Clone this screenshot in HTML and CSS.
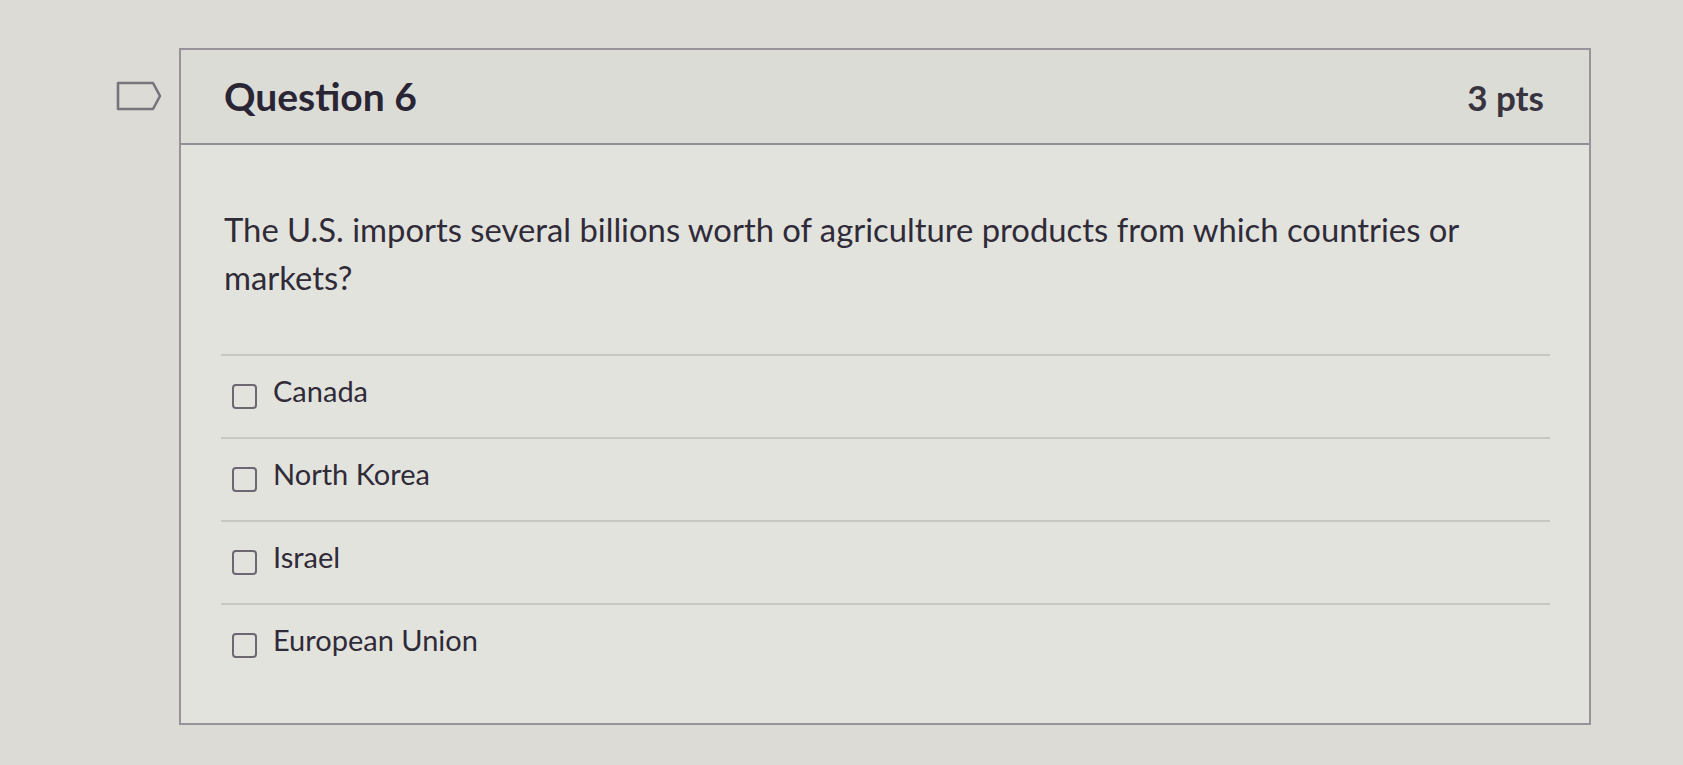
FILE: index.html
```html
<!DOCTYPE html>
<html lang="en">
<head>
<meta charset="utf-8">
<title>Question 6</title>
<link rel="stylesheet" href="styles.css">
</head>
<body>
<div class="quiz">
  <div class="flag-col">
    <svg class="flag" width="47" height="30" viewBox="0 0 47 30" aria-hidden="true">
      <path d="M2 2 H37 L44 15 L37 28 H2 Z" fill="none" stroke="#77747d" stroke-width="2.6" stroke-linejoin="round"/>
    </svg>
  </div>
  <div class="card">
    <div class="card-header">
      <h2 class="q-name">Question 6</h2>
      <span class="q-points">3 pts</span>
    </div>
    <div class="card-body">
      <p class="q-text">The U.S. imports several billions worth of agriculture products from which countries or markets?</p>
      <div class="answers">
        <label class="answer"><span class="box"></span><span class="answer-text">Canada</span></label>
        <label class="answer"><span class="box"></span><span class="answer-text">North Korea</span></label>
        <label class="answer"><span class="box"></span><span class="answer-text">Israel</span></label>
        <label class="answer"><span class="box"></span><span class="answer-text">European Union</span></label>
      </div>
    </div>
  </div>
</div>
</body>
</html>
```

FILE: styles.css
```css
html, body {
  margin: 0;
  padding: 0;
}
body {
  background: #dcdbd6;
  font-family: Lato, "Open Sans", sans-serif;
  color: #2e2a36;
  width: 1683px;
  height: 765px;
  overflow: hidden;
}
.quiz {
  display: flex;
  align-items: flex-start;
  padding-top: 48px;
  padding-left: 116px;
}
.flag-col {
  width: 63px;
  padding-top: 33px;
}
.flag {
  display: block;
}
.card {
  width: 1408px;
  border: 2px solid #98939a;
  background: #e3e3de;
}
.card-header {
  display: flex;
  justify-content: space-between;
  align-items: baseline;
  padding: 23px 45px 23px 43px;
  background: #dcdcd7;
  border-bottom: 2px solid #938e96;
}
.q-name {
  margin: 0;
  font-size: 39px;
  line-height: 46px;
  font-weight: 700;
  color: #2a2534;
}
.q-points {
  font-size: 35px;
  line-height: 46px;
  font-weight: 700;
  color: #38343f;
}
.card-body {
  padding: 61px 39px 37px 40px;
}
.q-text {
  margin: 0 0 52px 0;
  padding-left: 3px;
  font-size: 32.8px;
  line-height: 48px;
  color: #302b38;
}
.answers {
  display: flex;
  flex-direction: column;
}
.answer {
  display: flex;
  align-items: flex-start;
  gap: 16px;
  height: 40px;
  padding: 15px 0 26px 11px;
  border-top: 2px solid #c8c7c3;
}
.box {
  width: 21px;
  height: 21px;
  margin-top: 13px;
  border: 2px solid #6c6772;
  border-radius: 4px;
  flex: none;
}
.answer-text {
  font-size: 29px;
  line-height: 40px;
  color: #302b38;
}
```
